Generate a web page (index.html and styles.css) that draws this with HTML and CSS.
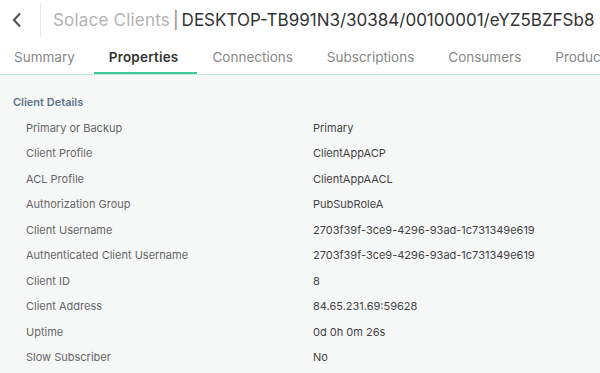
FILE: index.html
```html
<!DOCTYPE html>
<html>
<head>
<meta charset="utf-8">
<link rel="stylesheet" href="styles.css">
</head>
<body>
<div class="page">
  <header class="header">
    <div class="back">
      <svg width="12" height="16" viewBox="0 0 12 16"><path d="M9 1.5 L3 8 L9 14.5" fill="none" stroke="#555" stroke-width="2.2"/></svg>
    </div>
    <div class="divider"></div>
    <h1 class="title"><span class="crumb">Solace Clients</span><span class="sep">|</span><span class="name">DESKTOP-TB991N3/30384/00100001/eYZ5BZFSb8</span></h1>
  </header>
  <nav class="tabs">
    <div class="tab">Summary</div>
    <div class="tab active">Properties</div>
    <div class="tab">Connections</div>
    <div class="tab">Subscriptions</div>
    <div class="tab">Consumers</div>
    <div class="tab">Producers</div>
  </nav>
  <main class="content">
    <div class="section">Client Details</div>
    <div class="grid">
      <div class="label">Primary or Backup</div><div class="value">Primary</div>
      <div class="label">Client Profile</div><div class="value">ClientAppACP</div>
      <div class="label">ACL Profile</div><div class="value">ClientAppAACL</div>
      <div class="label">Authorization Group</div><div class="value">PubSubRoleA</div>
      <div class="label">Client Username</div><div class="value">2703f39f-3ce9-4296-93ad-1c731349e619</div>
      <div class="label">Authenticated Client Username</div><div class="value">2703f39f-3ce9-4296-93ad-1c731349e619</div>
      <div class="label">Client ID</div><div class="value">8</div>
      <div class="label">Client Address</div><div class="value">84.65.231.69:59628</div>
      <div class="label">Uptime</div><div class="value">0d 0h 0m 26s</div>
      <div class="label">Slow Subscriber</div><div class="value">No</div>
    </div>
  </main>
</div>
</body>
</html>
```
FILE: styles.css
```css
html, body {
  margin: 0;
  padding: 0;
  background: #ffffff;
  overflow: hidden;
}
body {
  font-family: Inter, "Noto Sans", sans-serif;
  color: #444;
}
.page {
  width: 600px;
  height: 373px;
  display: flex;
  flex-direction: column;
  overflow: hidden;
}
.header {
  height: 40px;
  display: flex;
  align-items: center;
  flex-shrink: 0;
}
.back {
  width: 40px;
  flex-shrink: 0;
  display: flex;
  justify-content: center;
  padding-right: 6px;
  box-sizing: border-box;
}
.divider {
  width: 1px;
  height: 34px;
  flex-shrink: 0;
  background: #e6e6e6;
}
.title {
  margin: 0 0 0 12px;
  font-size: 17px;
  font-weight: 400;
  white-space: nowrap;
  display: flex;
  align-items: baseline;
  flex-shrink: 0;
}
.crumb { color: #b3b3b3; letter-spacing: 0.2px; }
.sep { color: #888; margin: 0 3px; }
.name { color: #333; }
.tabs {
  display: flex;
  height: 35px;
  box-sizing: border-box;
  border-bottom: 1px solid #bfeede;
  white-space: nowrap;
  flex-shrink: 0;
  overflow: hidden;
}
.tab {
  padding: 2px 19px 0 15px;
  font-size: 13.5px;
  color: #888;
  display: flex;
  align-items: center;
  height: 30px;
  border-bottom: 2px solid transparent;
  flex-shrink: 0;
}
.tab:first-child { padding-left: 14px; }
.tab.active {
  color: #333;
  font-weight: 600;
  letter-spacing: 0.2px;
  border-bottom-color: #3ec79b;
}
.content {
  flex: 1;
  background: #f6f7f7;
  padding: 20px 0 0 13px;
}
.section {
  font-size: 11px;
  font-weight: 600;
  color: #62748a;
  height: 14px;
  line-height: 14px;
}
.grid {
  display: grid;
  grid-template-columns: 287px 1fr;
  grid-auto-rows: 25.5px;
  align-items: center;
  padding-left: 13px;
  margin-top: 6px;
  font-size: 11px;
}
.label { color: #666; }
.value { color: #444; }
```
